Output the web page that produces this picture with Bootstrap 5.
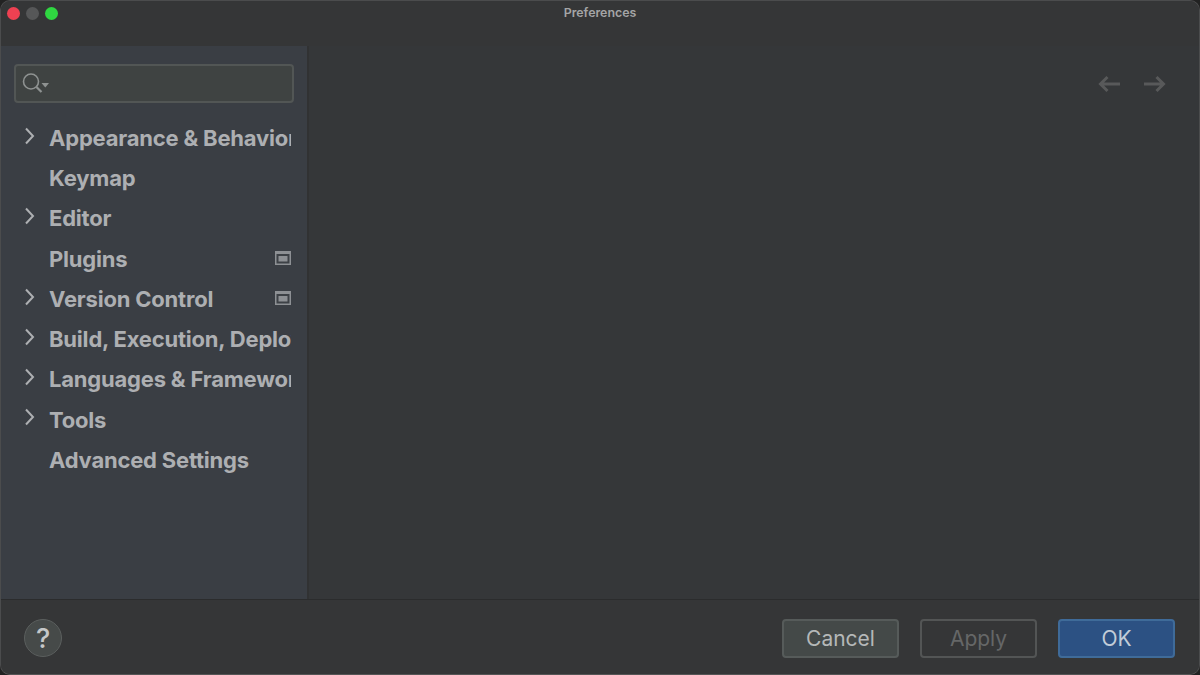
<!DOCTYPE html>
<html lang="en">
<head>
<meta charset="utf-8">
<title>Preferences</title>
<link href="https://cdn.jsdelivr.net/npm/bootstrap@5.3.0/dist/css/bootstrap.min.css" rel="stylesheet">
<style>
html,body{height:100%;margin:0;background:#222;overflow:hidden}
body{font-family:Inter,"Liberation Sans",sans-serif}
.win{width:1200px;height:675px;background:#353637;border-radius:10px;border:1px solid #4b4c4d;border-bottom-color:#555;overflow:hidden}
.tbar{height:45px;flex:none;padding:6px 0 0 6px;position:relative;background:#353637}
.dots{gap:6px}
.dot{width:13px;height:13px;border-radius:50%}
.d-r{background:#ee4152}.d-g{background:#565758}.d-v{background:#2fd741}
.wintitle{position:absolute;left:0;right:0;top:5px;text-align:center;font-size:12.4px;font-weight:600;color:#a4a5a6;line-height:14px}
.mainarea{flex:1 1 auto;min-height:0}
.side{width:306px;flex:none;background:#3a3e44;padding:18px 16px 0 13px}
.divv{width:2px;flex:none;background:#313233}
.content{flex:1 1 auto;background:#353739;padding:29px 33px 0 0}
.srch{height:39px;background:#3f4342;border:2px solid #525655;border-radius:4px;padding-left:5px;margin:0 -3px 15px 0}
.treerow{height:40.25px;font-size:22px;font-weight:700;color:#adafb2;line-height:1.35;white-space:nowrap}
.chev{width:35px;flex:none;padding:0 0 5px 10px;line-height:0}
.lbl{flex:1 1 auto;overflow:hidden;min-width:0;letter-spacing:-.2px;padding-top:1px}
.badgeico{flex:none;margin-bottom:2px}
.foot{height:75px;flex:none;border-top:1px solid #2b2c2d;background:#353637;padding:2px 24px 0 23px}
.helpb{width:38px;height:38px;border-radius:50%;background:#464a49;border:1px solid #5b5f5e;color:#c5c7c8;font-size:27px;font-weight:500;line-height:1;padding:0}
.btnrow{gap:21px}
.fbtn{width:117px;height:39px;border-radius:4px;font-size:21px;line-height:1;padding:0;font-weight:400}
.f-c{background:#444948;border:2px solid #565b5a;color:#b5b8b8}
.f-a{background:#353637;border:2px solid #535555;color:#656767}
.f-o{background:#2c5183;border:2px solid #3f6b99;color:#c2cdd8}
</style>
</head>
<body>
<div class="win d-flex flex-column">
  <div class="tbar">
    <div class="dots d-flex"><span class="dot d-r"></span><span class="dot d-g"></span><span class="dot d-v"></span></div>
    <div class="wintitle">Preferences</div>
  </div>
  <div class="mainarea d-flex">
    <div class="side">
      <div class="srch d-flex align-items-center">
        <svg width="30" height="26" viewBox="0 0 30 26" fill="none"><circle cx="10" cy="10.500" r="7.500" stroke="#8e9291" stroke-width="1.600"/><path d="M15.500 16L20.500 21" stroke="#8e9291" stroke-width="2.200"/><path d="M20.500 12h7.500l-3.700 4.500z" fill="#8e9291"/></svg>
      </div>
      <div class="treerow d-flex align-items-center"><span class="chev"><svg width="12" height="18" viewBox="0 0 12 18" fill="none"><path d="M2 1.500l7 7.500-7 7.500" stroke="#adafb2" stroke-width="2"/></svg></span><span class="lbl">Appearance &amp; Behavior</span></div>
      <div class="treerow d-flex align-items-center"><span class="chev"></span><span class="lbl">Keymap</span></div>
      <div class="treerow d-flex align-items-center"><span class="chev"><svg width="12" height="18" viewBox="0 0 12 18" fill="none"><path d="M2 1.500l7 7.500-7 7.500" stroke="#adafb2" stroke-width="2"/></svg></span><span class="lbl">Editor</span></div>
      <div class="treerow d-flex align-items-center"><span class="chev"></span><span class="lbl">Plugins</span><svg class="badgeico" width="16" height="14" viewBox="0 0 16 14"><rect width="16" height="14" fill="#8d9094"/><rect x="1.500" y="3" width="13" height="9.500" fill="#3d4146"/><rect x="3.500" y="5" width="9" height="5.500" fill="#8d9094"/></svg></div>
      <div class="treerow d-flex align-items-center"><span class="chev"><svg width="12" height="18" viewBox="0 0 12 18" fill="none"><path d="M2 1.500l7 7.500-7 7.500" stroke="#adafb2" stroke-width="2"/></svg></span><span class="lbl">Version Control</span><svg class="badgeico" width="16" height="14" viewBox="0 0 16 14"><rect width="16" height="14" fill="#8d9094"/><rect x="1.500" y="3" width="13" height="9.500" fill="#3d4146"/><rect x="3.500" y="5" width="9" height="5.500" fill="#8d9094"/></svg></div>
      <div class="treerow d-flex align-items-center"><span class="chev"><svg width="12" height="18" viewBox="0 0 12 18" fill="none"><path d="M2 1.500l7 7.500-7 7.500" stroke="#adafb2" stroke-width="2"/></svg></span><span class="lbl">Build, Execution, Deployment</span></div>
      <div class="treerow d-flex align-items-center"><span class="chev"><svg width="12" height="18" viewBox="0 0 12 18" fill="none"><path d="M2 1.500l7 7.500-7 7.500" stroke="#adafb2" stroke-width="2"/></svg></span><span class="lbl">Languages &amp; Frameworks</span></div>
      <div class="treerow d-flex align-items-center"><span class="chev"><svg width="12" height="18" viewBox="0 0 12 18" fill="none"><path d="M2 1.500l7 7.500-7 7.500" stroke="#adafb2" stroke-width="2"/></svg></span><span class="lbl">Tools</span></div>
      <div class="treerow d-flex align-items-center"><span class="chev"></span><span class="lbl">Advanced Settings</span></div>
    </div>
    <div class="divv"></div>
    <div class="content d-flex justify-content-end gap-4">
      <svg width="22" height="18" viewBox="0 0 22 18" fill="none"><path d="M22 9H2M9.500 2L2.500 9l7 7" stroke="#58595a" stroke-width="3"/></svg>
      <svg width="22" height="18" viewBox="0 0 22 18" fill="none"><path d="M0 9h20M12.500 2l7 7-7 7" stroke="#58595a" stroke-width="3"/></svg>
    </div>
  </div>
  <div class="foot d-flex align-items-center justify-content-between">
    <button type="button" class="btn helpb">?</button>
    <div class="d-flex btnrow">
      <button type="button" class="btn fbtn f-c">Cancel</button>
      <button type="button" class="btn fbtn f-a">Apply</button>
      <button type="button" class="btn fbtn f-o">OK</button>
    </div>
  </div>
</div>
<script src="https://cdn.jsdelivr.net/npm/bootstrap@5.3.0/dist/js/bootstrap.bundle.min.js"></script>
</body>
</html>
